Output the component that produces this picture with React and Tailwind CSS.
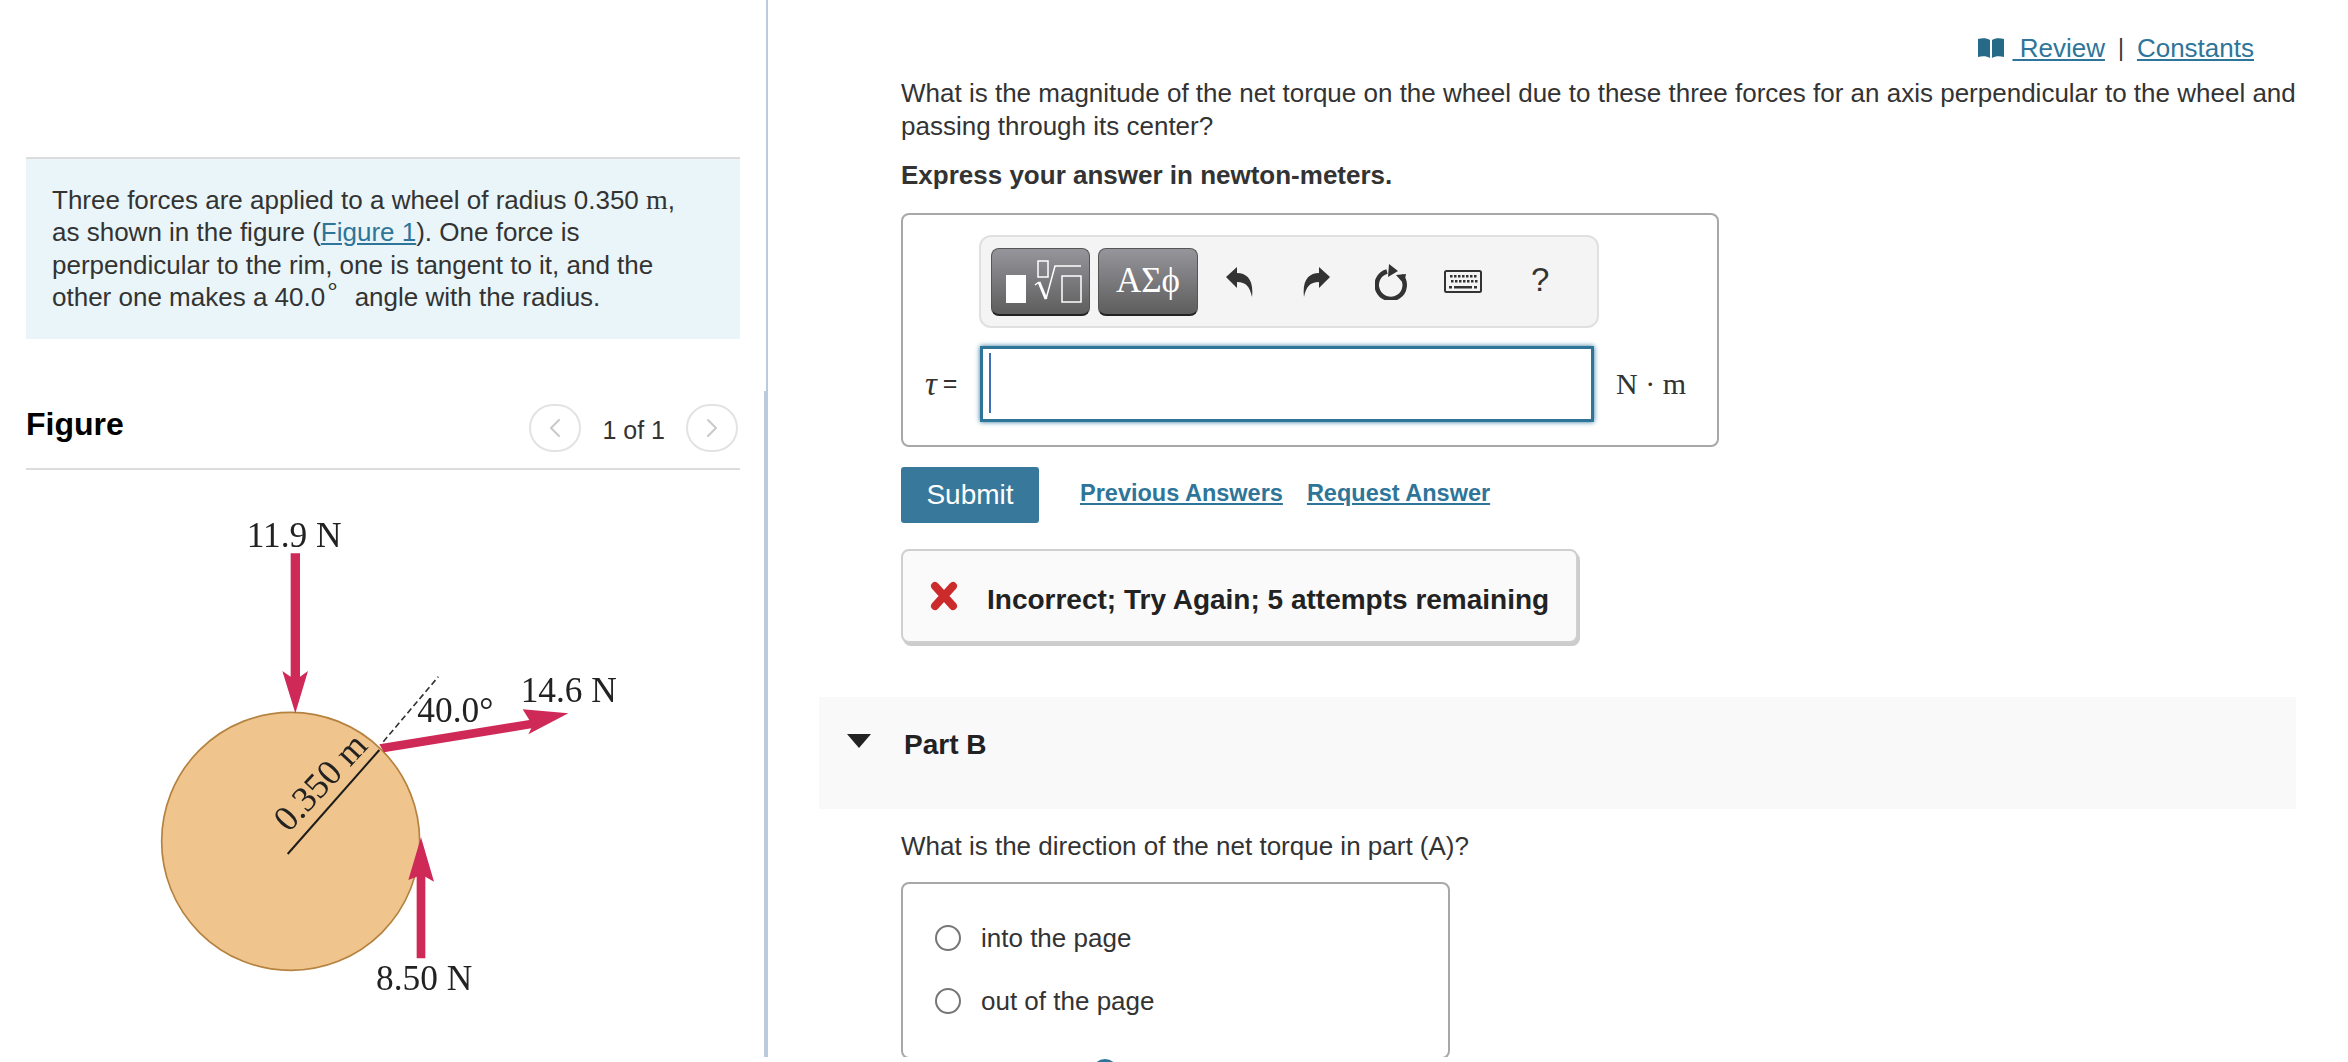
import { ChevronLeft, ChevronRight } from "lucide-react";

const SANS = "font-['Liberation_Sans',Arial,sans-serif]";
const SERIF = "font-['Liberation_Serif','Times_New_Roman',serif]";

// Wheel diagram, coordinates are 3x page pixels
function WheelFigure() {
  const red = "#cf2a57";
  const label = { fontFamily: "'Liberation Serif', serif", fontSize: 106, fill: "#222" };
  return (
    <svg viewBox="0 0 1560 1500" className="block w-[520px] h-[500px] blur-[0.4px]">
      <circle cx="512" cy="1024" r="387" fill="#f0c48d" stroke="#b5823f" strokeWidth="5" />
      <line x1="503" y1="1062" x2="778" y2="750" stroke="#1d1d1b" strokeWidth="6" />
      <line x1="790" y1="725" x2="955" y2="530" stroke="#333" strokeWidth="5" strokeDasharray="18 10" />
      <polygon fill={red} points="512,160 540,160 540,530 564,513 526,640 487,513 512,530" />
      <polygon fill={red} points="778,733 1228,660 1208,628 1345,640 1225,703 1234,685 792,757" />
      <polygon fill={red} points="890,1375 916,1375 916,1130 942,1145 903,1012 865,1140 890,1130" />
      <text x="380" y="140" style={label}>11.9 N</text>
      <text x="1202" y="605" style={label}>14.6 N</text>
      <text x="892" y="665" style={label}>40.0°</text>
      <text x="768" y="1470" style={label}>8.50 N</text>
      <text x="0" y="0" transform="translate(506 1000) rotate(-47)" style={{ ...label, fontSize: 108 }}>0.350 m</text>
    </svg>
  );
}

function RootIcon() {
  return (
    <svg viewBox="0 0 99 68" className="w-[99px] h-[68px]">
      <rect x="14" y="26" width="20" height="28" fill="#fff" />
      <rect x="46" y="12" width="10" height="16" fill="none" stroke="#fff" strokeWidth="1.5" />
      <path d="M43 36 L47 33" fill="none" stroke="#fff" strokeWidth="1.5" />
      <path d="M47 33 L54 50" fill="none" stroke="#fff" strokeWidth="3" />
      <path d="M54 50 L63 17 H89" fill="none" stroke="#fff" strokeWidth="1.5" />
      <rect x="70" y="27" width="19" height="26" fill="none" stroke="#fff" strokeWidth="1.5" />
    </svg>
  );
}

function UndoIcon({ flip }) {
  return (
    <svg viewBox="0 0 27 30" className={`w-[27px] h-[30px] ${flip ? "-scale-x-100" : ""}`}>
      <path
        d="M0 10 L11 0 V6 C21 6 28 13 26 30 C24 20 20 15 11 15 V21 Z"
        fill="#333"
      />
    </svg>
  );
}

function RefreshIcon() {
  return (
    <svg viewBox="0 0 32 36" className="w-[32px] h-[36px]">
      <path d="M12 7.5 A14 14 0 1 0 26 11.5" fill="none" stroke="#333" strokeWidth="4.5" />
      <polygon points="14,0 23,7 13,13" fill="#333" />
      <polygon points="21,11 31,10 29,20" fill="#333" />
    </svg>
  );
}

function KeyboardIcon() {
  const top = [6, 10, 14, 18, 22, 26, 30];
  return (
    <svg viewBox="0 0 38 23" className="w-[38px] h-[23px]">
      <rect x="1" y="1" width="36" height="21" rx="1.5" fill="#f4f4f4" stroke="#333" strokeWidth="2" />
      {top.map((x) => <rect key={x} x={x} y="5" width="2.5" height="2.5" fill="#333" />)}
      {top.map((x) => <rect key={x} x={x + 1} y="10" width="2.5" height="2.5" fill="#333" />)}
      <rect x="5" y="16" width="3" height="2.5" fill="#333" />
      <rect x="10" y="16" width="18" height="2.5" fill="#333" />
      <rect x="30" y="16" width="3" height="2.5" fill="#333" />
    </svg>
  );
}

function BookIcon() {
  return (
    <svg viewBox="0 0 26 20" className="w-[26px] h-[20px]">
      <path d="M0 1 C4 0 9 0 12 2 V20 C9 18 4 18 0 19 Z" fill="#266a87" />
      <path d="M26 1 C22 0 17 0 14 2 V20 C17 18 22 18 26 19 Z" fill="#266a87" />
    </svg>
  );
}

function Radio({ label, className }) {
  return (
    <label className={`flex items-center ${className}`}>
      <span className="w-[26px] h-[26px] rounded-full border-2 border-[#767676] bg-white" />
      <span className="ml-[20px] text-[26px] leading-[32px] text-[#333]">{label}</span>
    </label>
  );
}

export default function App() {
  return (
    <div className={`h-screen overflow-hidden bg-white text-[#333] ${SANS}`}>
      <div className="flex h-[1057px] overflow-hidden">

        {/* Left pane */}
        <div className="relative w-[768px] shrink-0 border-r-2 border-[#bccbdc] pl-[26px] pr-[26px]">
          <div className="absolute right-[-2px] top-[391px] bottom-0 w-[4px] bg-[#bccbdc]" />

          <div className="mt-[157px] h-[182px] w-[714px] border-t-2 border-[#dcdcdc] bg-[#e9f5f8] pl-[26px] pt-[25px] text-[26px] leading-[32.4px]">
            Three forces are applied to a wheel of radius 0.350 <span className={`text-[28px] leading-none ${SERIF}`}>m</span>,<br />
            as shown in the figure (<a href="#" className="text-[#2e7599] underline">Figure 1</a>). One force is<br />
            perpendicular to the rim, one is tangent to it, and the<br />
            other one makes a 40.0<sup className="text-[24px] leading-none">∘</sup>&nbsp; angle with the radius.
          </div>

          <div className="mt-[65px] flex h-[66px] w-[714px] items-start justify-between border-b-2 border-[#dcdcdc]">
            <h2 className="text-[32px] font-bold leading-[40px] text-black">Figure</h2>
            <div className="flex items-center pr-[2px]">
              <span className="flex h-[48px] w-[52px] items-center justify-center rounded-full border-2 border-[#e3e3e3]">
                <ChevronLeft className="h-[32px] w-[32px] text-[#c9c9c9]" strokeWidth={1.5} />
              </span>
              <span className="mx-[21px] pt-[5px] text-[25px]">1 of 1</span>
              <span className="flex h-[48px] w-[52px] items-center justify-center rounded-full border-2 border-[#e3e3e3]">
                <ChevronRight className="h-[32px] w-[32px] text-[#c9c9c9]" strokeWidth={1.5} />
              </span>
            </div>
          </div>

          <div className="ml-[94px] mt-[30px]">
            <WheelFigure />
          </div>
        </div>

        {/* Right pane */}
        <div className="min-w-0 flex-1 pl-[51px] pr-[52px]">
          <div className="mt-[32px] flex items-center justify-end pr-[42px] text-[26px] leading-[32px]">
            <BookIcon />
            <a href="#" className="ml-[8px] whitespace-pre text-[#2e7599] underline"> Review</a>
            <span className="mx-[13px] text-[23px] text-[#333]">|</span>
            <a href="#" className="text-[#2e7599] underline">Constants</a>
          </div>

          <div className="pl-[82px]">
            <p className="mt-[13px] text-[26px] leading-[33px]">
              What is the magnitude of the net torque on the wheel due to these three forces for an axis perpendicular to the wheel and<br />
              passing through its center?
            </p>
            <p className="mt-[16px] text-[26px] font-bold leading-[33px]">Express your answer in newton-meters.</p>

            {/* Answer box */}
            <div className="mt-[21px] h-[234px] w-[818px] rounded-[8px] border-2 border-[#a8a8a8] pl-[76px] pt-[20px]">
              <div className="flex h-[93px] w-[620px] items-center rounded-[12px] border-2 border-[#e0e0e0] bg-[#f4f4f4] pl-[10px]">
                <button className="h-[68px] w-[99px] rounded-[8px] border border-[#555] border-b-2 border-b-[#222] bg-gradient-to-b from-[#96959b] to-[#5e5e5e]">
                  <RootIcon />
                </button>
                <button className={`ml-[8px] h-[68px] w-[100px] rounded-[8px] border border-[#555] border-b-2 border-b-[#222] bg-gradient-to-b from-[#96959b] to-[#5e5e5e] text-[35px] text-white ${SERIF}`}>
                  AΣϕ
                </button>
                <span className="ml-[28px]"><UndoIcon /></span>
                <span className="ml-[50px]"><UndoIcon flip /></span>
                <span className="ml-[45px]"><RefreshIcon /></span>
                <span className="ml-[37px]"><KeyboardIcon /></span>
                <span className="ml-[49px] -mt-[3px] text-[33px] text-[#333]">?</span>
              </div>
              <div className="-ml-[54px] mt-[18px] flex items-center">
                <span className="flex w-[60px] items-center text-[25px]">
                  <i className={`text-[33px] leading-none ${SERIF}`}>τ</i>
                  <span className="ml-[6px]">=</span>
                </span>
                <div className="ml-[-5px] h-[76px] w-[614px] border-[3px] border-[#2e7599] bg-white pl-[6px] pt-[4px] shadow-[0_0_5px_#2e7599]">
                  <div className="h-[60px] w-[2px] bg-[#3f6fb5]" />
                </div>
                <span className={`ml-[22px] -mt-[2px] text-[30px] ${SERIF}`}>N · m</span>
              </div>
            </div>

            <div className="mt-[20px] flex items-center">
              <button className="h-[56px] w-[138px] rounded-[3px] bg-[#38789b] text-[28px] text-white">Submit</button>
              <a href="#" className="ml-[41px] -mt-[3px] text-[23.5px] font-bold text-[#2e7599] underline">Previous Answers</a>
              <a href="#" className="ml-[24px] -mt-[3px] text-[23.5px] font-bold text-[#2e7599] underline">Request Answer</a>
            </div>

            <div className="mt-[26px] flex h-[94px] w-[677px] items-center rounded-[8px] border-2 border-[#cfcfcf] bg-[#fafafa] pl-[27px] shadow-[2px_3px_0_#cccccc]">
              <svg viewBox="0 0 28 30" className="h-[30px] w-[28px]">
                <path d="M5 5 L23 25 M23 5 L5 25" stroke="#cc2b2b" strokeWidth="8" strokeLinecap="round" />
              </svg>
              <span className="ml-[29px] pt-[8px] text-[28px] font-bold text-[#222]">Incorrect; Try Again; 5 attempts remaining</span>
            </div>
          </div>

          {/* Part B */}
          <div className="mt-[54px] flex h-[112px] items-start bg-[#f9f9f9] pl-[28px] pt-[30px]">
            <span className="mt-[7px] h-0 w-0 border-x-[12px] border-t-[14px] border-x-transparent border-t-[#222]" />
            <span className="ml-[33px] text-[28px] font-bold leading-[36px] text-[#222]">Part B</span>
          </div>

          <div className="pl-[82px]">
            <p className="mt-[21px] text-[26px] leading-[33px]">What is the direction of the net torque in part (A)?</p>
            <div className="mt-[19px] h-[177px] w-[549px] rounded-[8px] border-2 border-[#a8a8a8] pl-[32px] pt-[38px]">
              <Radio label="into the page" />
              <Radio label="out of the page" className="mt-[31px]" />
            </div>
          </div>
        </div>
      </div>

      {/* edge of the next control, cut off by the window */}
      <div className="h-[5px] overflow-hidden pl-[1092px]">
        <div className="mt-[2px] h-[26px] w-[26px] rounded-full bg-[#2e7599]" />
      </div>
    </div>
  );
}
